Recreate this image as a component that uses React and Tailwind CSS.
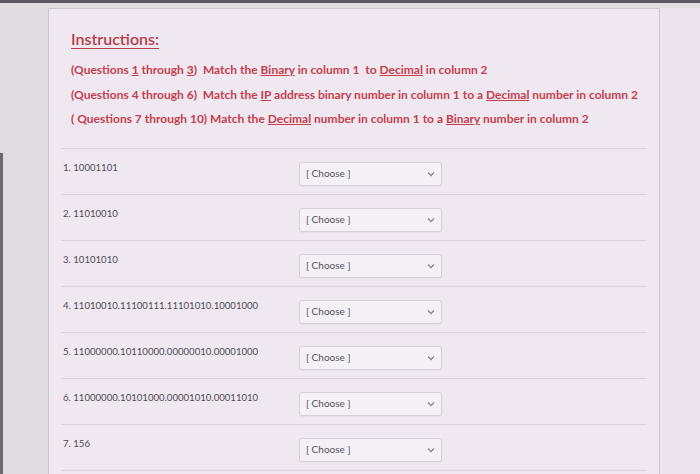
import React from "react";

const rows = [
    "1. 10001101",
    "2. 11010010",
    "3. 10101010",
    "4. 11010010.11100111.11101010.10001000",
    "5. 11000000.10110000.00000010.00001000",
    "6. 11000000.10101000.00001010.00011010",
    "7. 156",
];

function Chevron() {
    return (
        <svg width="8" height="6" viewBox="0 0 8 6" className="text-[#8a8590]">
            <path d="M1 1.5 L4 4.5 L7 1.5" fill="none" stroke="currentColor" strokeWidth="1.3" />
        </svg>
    );
}

function ChooseSelect() {
    return (
        <div className="w-[143px] h-[24px] flex items-center justify-between pl-[6px] pr-[6px] border border-[#d6d0d8] rounded-[3px] bg-[#f4f0f5] shadow-[0_1px_1px_rgba(0,0,0,0.04)]">
            <span className="text-[10px] text-[#55525a]">[ Choose ]</span>
            <Chevron />
        </div>
    );
}

export default function App() {
    return (
        <div
            className="w-[700px] h-[474px] overflow-hidden bg-[#dedce0] flex flex-col"
            style={{ fontFamily: "Lato, 'Open Sans', sans-serif" }}
        >
            <div className="h-[3px] bg-[#5a5760]" />
            <div className="flex flex-1">
                <div className="w-[3px] bg-[#6a6770] mt-[150px]" />
                <div className="w-[45px]" />
                <div className="w-[612px] mt-[5px] border-t border-l border-r border-[#cdc8d0] bg-[#f0e8f1] px-[12px]">
                    <div className="pl-[10px] pt-[20px]">
                        <h2 className="text-[16px] font-semibold text-[#b6404c] underline decoration-[1px] underline-offset-[3px] leading-[20px]">
                            Instructions:
                        </h2>
                        <div className="mt-[12px] flex flex-col gap-[7px] text-[12px] font-bold text-[#c4404c] leading-[17.5px]">
                            <p>
                                (Questions <span className="underline">1</span> through <span className="underline">3</span>)&nbsp; Match the <span className="underline">Binary</span> in column 1&nbsp; to <span className="underline">Decimal</span> in column 2
                            </p>
                            <p>
                                (Questions 4 through 6)&nbsp; Match the <span className="underline">IP</span> address binary number in column 1 to a <span className="underline">Decimal</span> number in column 2
                            </p>
                            <p>
                                ( Questions 7 through 10) Match the <span className="underline">Decimal</span> number in column 1 to a <span className="underline">Binary</span> number in column 2
                            </p>
                        </div>
                    </div>
                    <div className="mt-[20px] border-t border-[#d8d2da]">
                        {rows.map((r) => (
                            <div key={r} className="h-[46px] flex border-b border-[#d8d2da]">
                                <div className="w-[238px] pl-[2px] pt-[13px] text-[9.6px] text-[#4f4c55] leading-[12px]">
                                    {r}
                                </div>
                                <div className="pt-[13px]">
                                    <ChooseSelect />
                                </div>
                            </div>
                        ))}
                    </div>
                </div>
                <div className="flex-1 bg-[#ebe4ec] mt-[5px]" />
            </div>
        </div>
    );
}
